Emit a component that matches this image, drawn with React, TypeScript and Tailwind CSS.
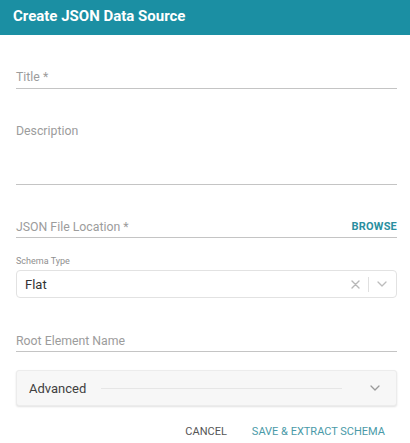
import React from "react";

const font = { fontFamily: "Roboto, 'Noto Sans', Arial, sans-serif" };

function Chevron({ className }: { className?: string }) {
  return (
    <svg width="10" height="6" viewBox="0 0 10 6" className={className}>
      <path d="M1 1 L5 5 L9 1" fill="none" stroke="currentColor" strokeWidth="1.3" strokeLinecap="round" strokeLinejoin="round" />
    </svg>
  );
}

function Cross() {
  return (
    <svg width="9" height="9" viewBox="0 0 9 9" className="text-[#b8b8b8]">
      <path d="M1 1 L8 8 M8 1 L1 8" fill="none" stroke="currentColor" strokeWidth="1.4" strokeLinecap="round" />
    </svg>
  );
}

export default function App() {
  return (
    <div className="w-[410px] h-[443px] bg-white overflow-hidden" style={font}>
      {/* dialog header */}
      <div className="h-[35px] bg-[#1b8fa3] pl-[13px] pt-[6px] text-[15px] leading-[20px] font-bold text-white">
        Create JSON Data Source
      </div>

      <div className="pl-4 pr-[13px]">
        {/* title */}
        <div className="mt-[34px] pb-[3px] border-b border-[#c4c4c4] text-[12.3px] leading-[16px] text-[#9c9c9c]">
          Title *
        </div>

        {/* description */}
        <div className="mt-[34px] h-[62px] border-b border-[#c4c4c4] text-[12.3px] leading-[16px] text-[#9c9c9c]">
          Description
        </div>

        {/* file location */}
        <div className="mt-[34px] pb-[2px] border-b border-[#c4c4c4] flex items-end justify-between text-[12.3px] leading-[16px]">
          <span className="text-[#9c9c9c]">JSON File Location *</span>
          <span className="text-[11px] font-bold text-[#2a8fa0] tracking-[0.2px]">BROWSE</span>
        </div>

        {/* schema type select */}
        <div className="mt-[17px] text-[9px] leading-[12px] text-[#8f8f8f]">Schema Type</div>
        <div className="mt-[3px] h-[28px] rounded-[4px] border border-[#e2e2e2] flex items-center pl-[8px] pr-[9px]">
          <span className="flex-1 pt-[1px] text-[13px] text-[#333]">Flat</span>
          <Cross />
          <span className="mx-[8px] h-[15px] w-px bg-[#e0e0e0]" />
          <Chevron className="text-[#bcbcbc]" />
        </div>

        {/* root element */}
        <div className="mt-[35px] pb-[2px] border-b border-[#c4c4c4] text-[12.3px] leading-[16px] text-[#9c9c9c]">
          Root Element Name
        </div>

        {/* advanced section */}
        <div className="mt-[18px] h-[36px] rounded-[3px] bg-[#f7f7f7] border border-[#ececec] shadow-[0_1px_2px_rgba(0,0,0,0.12)] flex items-center pl-[12px] pr-[16px]">
          <span className="pt-[2px] text-[13px] text-[#404040]">Advanced</span>
          <span className="ml-[15px] mr-[28px] flex-1 h-px bg-[#e6e6e6]" />
          <Chevron className="text-[#9a9a9a]" />
        </div>

        {/* actions */}
        <div className="mt-[18px] flex justify-end gap-[25px] pr-[12px] text-[11px] leading-[16px]">
          <span className="text-[#555]">CANCEL</span>
          <span className="text-[#4a9aa8]">SAVE &amp; EXTRACT SCHEMA</span>
        </div>
      </div>
    </div>
  );
}
